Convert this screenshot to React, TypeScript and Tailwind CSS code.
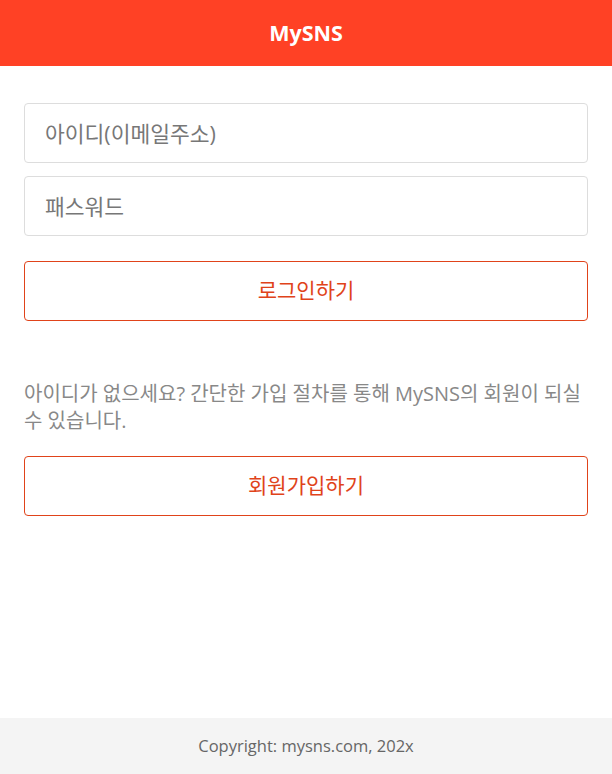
import React from "react";

export default function App() {
  const font = { fontFamily: '"Open Sans", "Noto Sans CJK KR", sans-serif' };
  return (
    <div style={font} className="flex min-h-[774px] w-full flex-col bg-white">
      <header className="flex h-[66px] items-center justify-center bg-[#ff4125]">
        <h1 className="text-[21.5px] font-bold text-white">MySNS</h1>
      </header>
      <main className="flex flex-1 flex-col px-6 pt-[37px]">
        <input
          style={font}
          className="h-[60px] w-full rounded-[4px] border border-[#dddddd] px-5 text-[21.5px] text-[#333] placeholder:text-[#777] outline-none"
          placeholder="아이디(이메일주소)"
        />
        <input
          type="password"
          style={font}
          className="mt-[13px] h-[60px] w-full rounded-[4px] border border-[#dddddd] px-5 text-[21.5px] text-[#333] placeholder:text-[#777] outline-none"
          placeholder="패스워드"
        />
        <button
          style={font}
          className="mt-[25px] h-[60px] w-full rounded-[4px] border border-[#e0431a] bg-white text-[21px] text-[#e0431a]"
        >
          로그인하기
        </button>
        <p className="mt-[59px] text-[20px] leading-[27px] text-[#888]">
          아이디가 없으세요? 간단한 가입 절차를 통해 MySNS의 회원이 되실 수 있습니다.
        </p>
        <button
          style={font}
          className="mt-[22px] h-[60px] w-full rounded-[4px] border border-[#e0431a] bg-white text-[21px] text-[#e0431a]"
        >
          회원가입하기
        </button>
      </main>
      <footer className="flex h-[56px] items-center justify-center bg-[#f4f4f4] text-[16.5px] text-[#666]">
        Copyright: mysns.com, 202x
      </footer>
    </div>
  );
}
